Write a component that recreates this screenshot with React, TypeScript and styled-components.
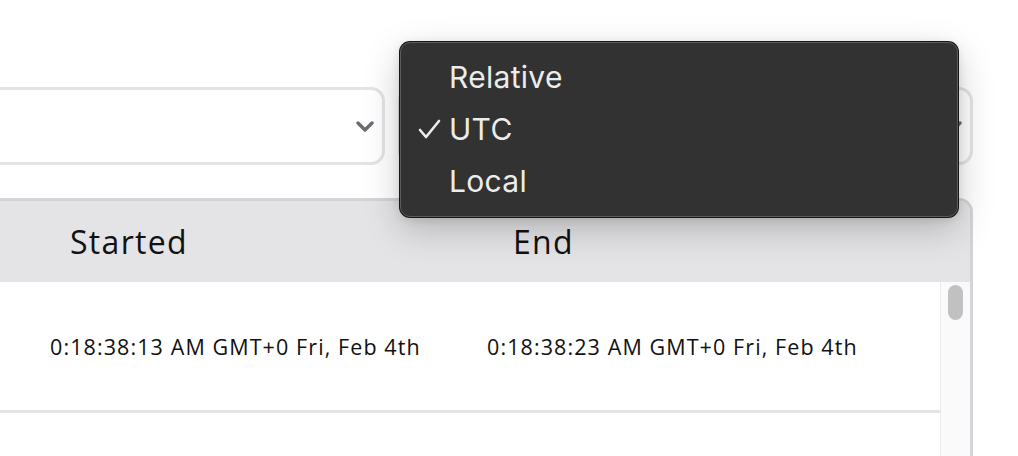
import React from "react";
import styled, { createGlobalStyle } from "styled-components";

const GlobalStyle = createGlobalStyle`
  html, body {
    margin: 0;
    padding: 0;
    background: #ffffff;
    overflow: hidden;
  }
  * {
    box-sizing: border-box;
  }
`;

const Page = styled.div`
  position: relative;
  width: 973px;
  height: 456px;
  padding-top: 87px;
  font-family: "Open Sans", "Liberation Sans", sans-serif;
  color: #111111;
`;

const Toolbar = styled.div`
  display: flex;
  gap: 13px;
  height: 78px;
`;

const SelectBox = styled.div<{ $width?: number; $openLeft?: boolean }>`
  display: flex;
  align-items: center;
  justify-content: flex-end;
  padding-right: 8px;
  ${(p) => (p.$width ? `width: ${p.$width}px;` : "flex: 1;")}
  height: 100%;
  background: #ffffff;
  border: 3px solid #e4e4e7;
  border-left: ${(p) => (p.$openLeft ? "none" : "3px solid #e4e4e7")};
  border-radius: ${(p) => (p.$openLeft ? "0 14px 14px 0" : "14px")};
`;

const TablePanel = styled.div`
  margin-top: 33px;
  height: 258px;
  overflow: hidden;
  border-top: 3px solid #d4d4d8;
  border-right: 3px solid #d4d4d8;
  border-radius: 0 14px 0 0;
  display: flex;
  flex-direction: column;
`;

const HeaderRow = styled.div`
  display: grid;
  grid-template-columns: 437px 1fr;
  padding-left: 50px;
  height: 81px;
  flex-shrink: 0;
  align-items: center;
  background: #e4e4e7;
  font-size: 32px;
  letter-spacing: 1.3px;
`;

const HeaderCell = styled.div<{ $inset: number }>`
  padding-left: ${(p) => p.$inset}px;
`;

const Body = styled.div`
  display: flex;
  flex: 1;
  min-height: 0;
`;

const Rows = styled.div`
  flex: 1;
  display: flex;
  flex-direction: column;
`;

const Row = styled.div<{ $height: number }>`
  display: grid;
  grid-template-columns: 437px 1fr;
  padding-left: 50px;
  align-items: center;
  height: ${(p) => p.$height}px;
  flex-shrink: 0;
  border-bottom: 3px solid #e4e4e7;
  font-size: 21.5px;
  letter-spacing: 1.1px;
  white-space: nowrap;
`;

const ScrollTrack = styled.div`
  width: 30px;
  background: #fafafa;
  border-left: 1px solid #ebebeb;
  padding: 3px 0 0 7px;
`;

const ScrollThumb = styled.div`
  width: 15px;
  height: 35px;
  border-radius: 8px;
  background: #c1c1c1;
`;

const Menu = styled.div`
  position: absolute;
  left: 400px;
  top: 42px;
  width: 558px;
  height: 175px;
  padding: 8px 0;
  background: #323232;
  border: 1px solid #5c5c5c;
  border-radius: 10px;
  box-shadow: 0 0 0 1px #151515, 0 12px 36px rgba(0, 0, 0, 0.22),
    0 2px 10px rgba(0, 0, 0, 0.12);
  font-family: Inter, "Liberation Sans", sans-serif;
  font-size: 30px;
  letter-spacing: 0.3px;
  color: #ececec;
`;

const MenuItem = styled.div`
  display: flex;
  align-items: center;
  height: 52px;
  padding-left: 17px;
`;

const CheckSlot = styled.span`
  display: flex;
  align-items: center;
  width: 31px;
  height: 100%;
`;

const Chevron = ({ color }: { color: string }) => (
  <svg width="18" height="11" viewBox="0 0 18 11">
    <polyline
      points="2,2 9,9 16,2"
      fill="none"
      stroke={color}
      strokeWidth="3.4"
      strokeLinecap="round"
      strokeLinejoin="round"
    />
  </svg>
);

const Check = () => (
  <svg width="23" height="20" viewBox="0 0 23 20">
    <polyline
      points="2,11 8,18 21,2"
      fill="none"
      stroke="#ececec"
      strokeWidth="2.6"
      strokeLinecap="round"
      strokeLinejoin="round"
    />
  </svg>
);

const options = [
  { label: "Relative", checked: false },
  { label: "UTC", checked: true },
  { label: "Local", checked: false },
];

const App: React.FC = () => {
  return (
    <>
      <GlobalStyle />
      <Page>
        <Toolbar>
          <SelectBox $width={385} $openLeft>
            <Chevron color="#6b6b73" />
          </SelectBox>
          <SelectBox>
            <Chevron color="#6b6b73" />
          </SelectBox>
        </Toolbar>

        <TablePanel>
          <HeaderRow>
            <HeaderCell $inset={20}>Started</HeaderCell>
            <HeaderCell $inset={26}>End</HeaderCell>
          </HeaderRow>
          <Body>
            <Rows>
              <Row $height={131}>
                <span>0:18:38:13 AM GMT+0 Fri, Feb 4th</span>
                <span>0:18:38:23 AM GMT+0 Fri, Feb 4th</span>
              </Row>
              <Row $height={131} />
            </Rows>
            <ScrollTrack>
              <ScrollThumb />
            </ScrollTrack>
          </Body>
        </TablePanel>

        <Menu>
          {options.map((opt) => (
            <MenuItem key={opt.label}>
              <CheckSlot>{opt.checked && <Check />}</CheckSlot>
              {opt.label}
            </MenuItem>
          ))}
        </Menu>
      </Page>
    </>
  );
};

export default App;
